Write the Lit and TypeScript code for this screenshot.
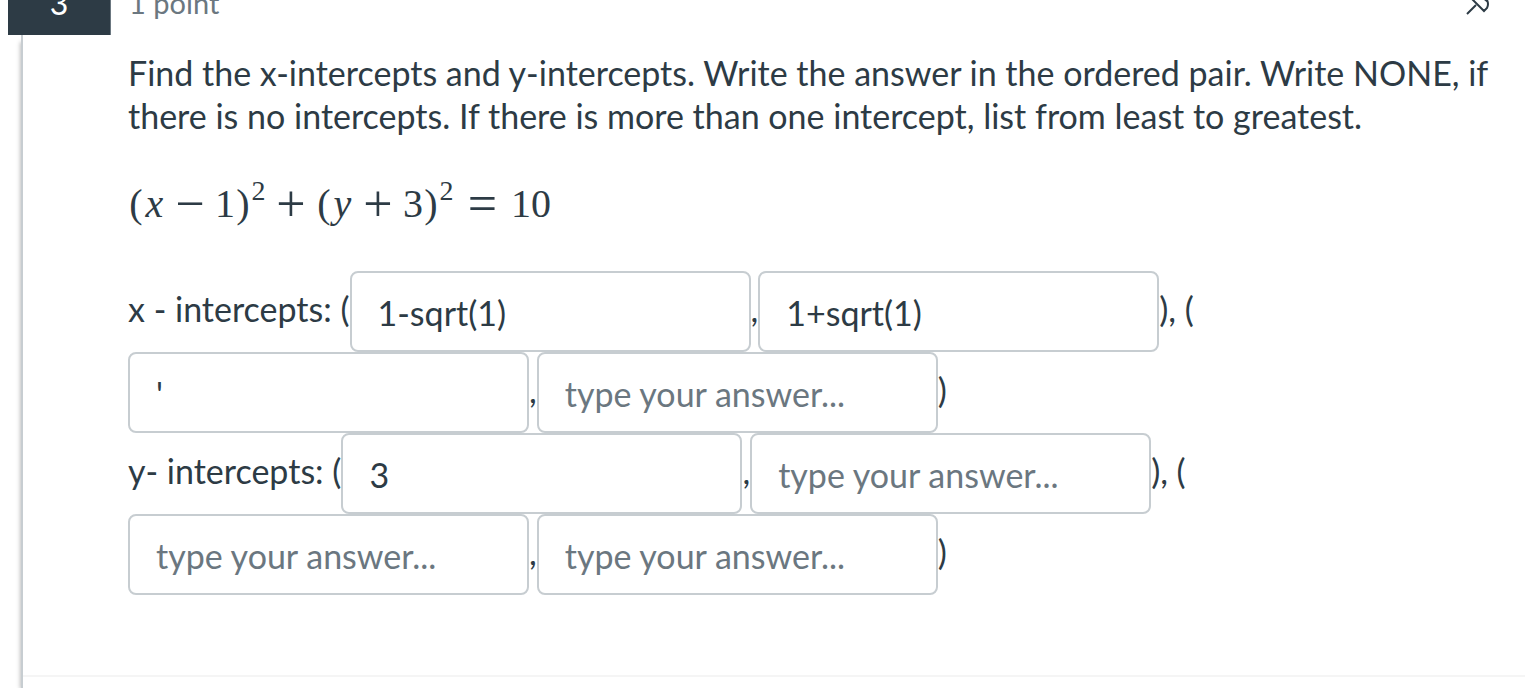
import { LitElement, html, css } from "lit";
import { customElement, property } from "lit/decorators.js";

@customElement("math-equation")
class MathEquation extends LitElement {
  static styles = css`
    :host {
      display: flex;
      align-items: baseline;
      font-family: "Liberation Serif", serif;
      font-size: 40px;
      line-height: 48px;
    }
    span {
      text-align: center;
    }
    .paren {
      width: 16px;
    }
    .num {
      width: 20px;
    }
    .var {
      width: 21px;
      font-style: italic;
    }
    .op {
      width: 50px;
    }
    .rel {
      width: 57px;
    }
    .op,
    .rel {
      align-self: flex-start;
      font-size: 52px;
    }
    .sup {
      width: 15px;
      font-size: 28px;
      line-height: 22px;
      align-self: flex-start;
    }
  `;

  render() {
    return html`<span class="paren">(</span><span class="var">x</span
      ><span class="op">−</span><span class="num">1</span
      ><span class="paren">)</span><span class="sup">2</span
      ><span class="op">+</span><span class="paren">(</span
      ><span class="var">y</span><span class="op">+</span
      ><span class="num">3</span><span class="paren">)</span
      ><span class="sup">2</span><span class="rel">=</span><span>10</span>`;
  }
}

@customElement("answer-blank")
class AnswerBlank extends LitElement {
  @property() value = "";
  @property() label = "";

  static styles = css`
    :host {
      display: inline-block;
      vertical-align: -4px;
    }
    input {
      display: block;
      box-sizing: border-box;
      width: 401px;
      height: 81px;
      padding: 2px 26px 0;
      border: 2px solid #c7cdd1;
      border-radius: 8px;
      background: #fff;
      color: #2d3b45;
      font: 34px Lato, sans-serif;
      outline: none;
    }
    input::placeholder {
      color: #6b7780;
      opacity: 1;
    }
  `;

  render() {
    return html`<input
      type="text"
      aria-label=${this.label}
      placeholder="type your answer..."
      .value=${this.value}
    />`;
  }
}

@customElement("app-root")
class AppRoot extends LitElement {
  static styles = css`
    :host {
      display: flex;
      flex-direction: column;
      min-height: 100vh;
      background: #fff;
      color: #2d3b45;
      font-family: Lato, sans-serif;
      font-size: 34px;
      line-height: 43px;
      overflow: hidden;
    }
    header {
      display: flex;
      align-items: flex-end;
      height: 35px;
      padding-left: 8px;
      padding-right: 32px;
      overflow: hidden;
    }
    .number,
    .points {
      box-sizing: border-box;
      height: 72px;
      padding-top: 20px;
      line-height: 40px;
    }
    .number {
      width: 103px;
      background: #2d3b45;
      border-right: 1px solid #6b7780;
      color: #fff;
      font-size: 32px;
      text-align: center;
    }
    .points {
      flex: 1;
      padding-left: 18px;
      color: #6b7780;
      font-size: 29px;
    }
    .pin {
      height: 66px;
      padding: 0 0 18px;
      border: 0;
      background: none;
      color: #2d3b45;
    }
    .pin svg {
      display: block;
    }
    main {
      flex: 1;
      display: flex;
      flex-direction: column;
      margin-left: 21px;
      border-left: 2px solid #c7cdd1;
      box-shadow: -4px 4px 4px -3px rgba(0, 0, 0, 0.25);
    }
    .question {
      padding: 16px 32px 80px 105px;
      border-bottom: 2px solid #f5f5f5;
    }
    p {
      margin: 0;
    }
    math-equation {
      margin: 43px 0;
    }
  `;

  render() {
    return html`
      <header>
        <div class="number">3</div>
        <div class="points">1 point</div>
        <button class="pin" type="button" aria-label="Pin question">
          <svg
            width="28"
            height="48"
            viewBox="0 0 28 48"
            fill="none"
            stroke="currentColor"
            stroke-width="2"
          >
            <path
              d="M2 45 L11 36 M6 29 L19 42 L22 39 Q24 35 22 31 L26 27 M16 27 L23 33"
            />
          </svg>
        </button>
      </header>
      <main>
        <section class="question">
          <p>
            Find the x-intercepts and y-intercepts. Write the answer in the
            ordered pair. Write NONE, if there is no intercepts. If there is
            more than one intercept, list from least to greatest.
          </p>
          <math-equation></math-equation>
          <p>
            x - intercepts: (<answer-blank
              label="First x-intercept, x"
              value="1-sqrt(1)"
            ></answer-blank
            >,<answer-blank
              label="First x-intercept, y"
              value="1+sqrt(1)"
            ></answer-blank
            >), (<answer-blank
              label="Second x-intercept, x"
              value="'"
            ></answer-blank
            >,<answer-blank label="Second x-intercept, y"></answer-blank>)
          </p>
          <p>
            y- intercepts: (<answer-blank
              label="First y-intercept, x"
              value="3"
            ></answer-blank
            >,<answer-blank label="First y-intercept, y"></answer-blank>),
            (<answer-blank label="Second y-intercept, x"></answer-blank
            >,<answer-blank label="Second y-intercept, y"></answer-blank>)
          </p>
        </section>
      </main>
    `;
  }
}
